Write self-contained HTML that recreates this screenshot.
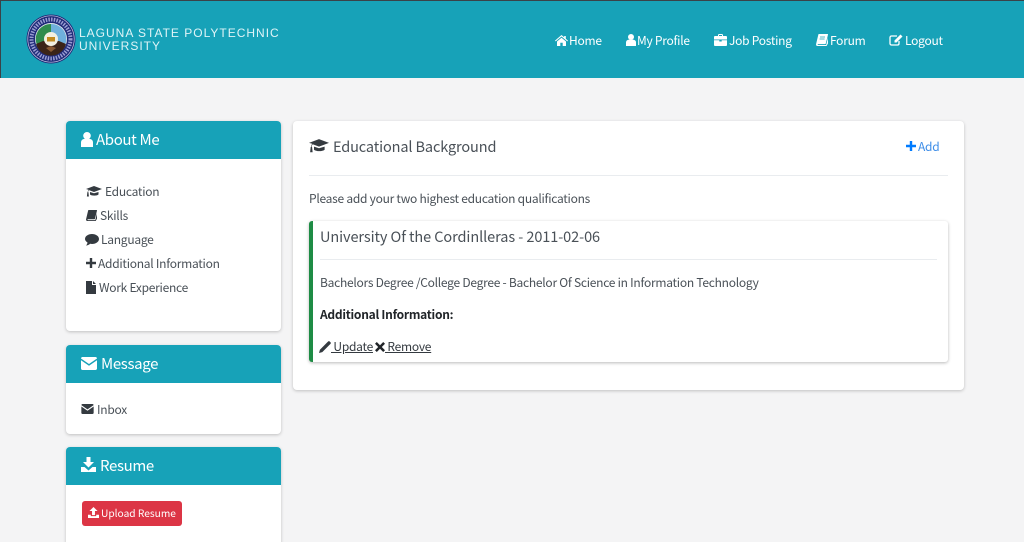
<!DOCTYPE html>
<html lang="en">
<head>
<meta charset="utf-8">
<title>Educational Background</title>
<style>
html,body{margin:0;padding:0;width:1024px;height:542px;overflow:hidden}
body{background:#f4f4f5;font-family:"Noto Sans CJK SC","Liberation Sans",sans-serif;font-size:12px;letter-spacing:-.26px;color:#495057}
#w{position:relative;width:1024px;height:542px;overflow:hidden}
.a{position:absolute;white-space:nowrap}
.t{position:absolute;white-space:nowrap;line-height:20px}
svg{position:absolute;display:block}
.card{position:absolute;background:#fff;border-radius:4px;box-shadow:0 1px 3px rgba(0,0,0,.22)}
.hd{position:absolute;background:#17a2b8;border-radius:4px 4px 0 0;left:66px;width:215px;height:38px}
.nav{color:#fff;font-size:12px}
.h{color:#fff;font-size:15px;letter-spacing:-.35px}
</style>
</head>
<body>
<div id="w">
<div class="a" style="left:0;top:0;width:1024px;height:78px;background:#17a2b8;border-top:1px solid #3a4248;border-left:1px solid #3a4248;box-sizing:border-box"></div>

<svg style="left:26px;top:14px" width="50" height="50" viewBox="0 0 50 50">
<circle cx="25" cy="25" r="24.500" fill="#1f2a78"/>
<circle cx="25" cy="25" r="23.200" fill="none" stroke="#c9cbe6" stroke-width=".7"/>
<circle cx="25" cy="25" r="19.500" fill="none" stroke="#9a9ed2" stroke-width="4" stroke-dasharray="1.500 1.200"/>
<circle cx="25" cy="25" r="16" fill="#e4e8ec"/>
<path d="M25 25L25 10A15 15 0 0 0 11 31Z" fill="#2f8c4d"/>
<path d="M25 25L25 10A15 15 0 0 1 39 31Z" fill="#6fb0dc"/>
<path d="M10 30A15.500 15.500 0 0 0 40 30L33 27H17Z" fill="#3b2418"/>
<circle cx="25" cy="25" r="7" fill="#f2efe0"/>
<rect x="21" y="23" width="8" height="4.500" fill="#c28a1e"/>
<path d="M20 34l5-2 5 2-5 4z" fill="#8a5a34"/>
</svg>
<div class="t" style="left:79px;top:27px;font-family:'Liberation Sans',sans-serif;font-size:12px;line-height:13px;color:#dff4f7;letter-spacing:1px">LAGUNA STATE POLYTECHNIC<br>UNIVERSITY</div>

<!-- nav -->
<svg style="left:555px;top:35px" width="13" height="11" viewBox="0 0 13 11"><path d="M6.500 0L0 5.600l.7.8L6.500 1.500l5.800 4.900.7-.8-2.200-1.900V1h-1.600v1.200zM2 6.500V11h3.300V7.700h2.400V11H11V6.500L6.500 2.700z" fill="#fff"/></svg>
<div class="t nav" style="left:569px;top:31px">Home</div>
<svg style="left:626px;top:34px" width="10" height="12" viewBox="0 0 10 12"><circle cx="5" cy="3" r="3" fill="#fff"/><path d="M0 12V8.500C0 6.800 1.300 5.700 2.500 5.700h5C8.700 5.700 10 6.800 10 8.500V12z" fill="#fff"/></svg>
<div class="t nav" style="left:637px;top:31px">My Profile</div>
<svg style="left:714px;top:34px" width="13" height="12" viewBox="0 0 13 12"><path d="M4 2V1.200C4 .6 4.500 0 5 0h3c.5 0 1 .6 1 1.200V2h3c.6 0 1 .4 1 1v2.500H0V3c0-.6.4-1 1-1zm1 0h3V1H5zM0 6.300h5.300v1.200h2.400V6.300H13V11c0 .6-.4 1-1 1H1c-.6 0-1-.4-1-1z" fill="#fff"/></svg>
<div class="t nav" style="left:729px;top:31px">Job Posting</div>
<svg style="left:816px;top:34px" width="12" height="12" viewBox="0 0 12 12"><path d="M3 0h8.500c.4 0 .5.300.5.600L9.800 9.500c-.1.400-.4.600-.8.600H2.300c-.8 0-.9.900-.1.900H9.500c.4 0 .7-.2.800-.5L12 3.500v6L10.500 12H1.500C.5 12-.2 11 .1 10L2.300.7C2.400.3 2.700 0 3 0z" fill="#fff"/><path d="M4 3h5M3.600 5h5" stroke="#17a2b8" stroke-width=".8"/></svg>
<div class="t nav" style="left:830px;top:31px">Forum</div>
<svg style="left:889px;top:34px" width="14" height="12" viewBox="0 0 14 12"><path d="M10 7v2.500c0 .9-.6 1.500-1.500 1.500h-6C1.600 11 1 10.400 1 9.500v-6C1 2.600 1.600 2 2.500 2H8" fill="none" stroke="#fff" stroke-width="1.300"/><path d="M11.500.5l2 2L7.500 8.500H5.500v-2z" fill="#fff"/></svg>
<div class="t nav" style="left:905px;top:31px">Logout</div>

<!-- About Me -->
<div class="card" style="left:66px;top:121px;width:215px;height:210px"></div>
<div class="hd" style="top:121px"></div>
<svg style="left:81px;top:132px" width="12" height="15" viewBox="0 0 12 15"><circle cx="6" cy="3.800" r="3.800" fill="#fff"/><path d="M0 15v-4.500C0 8.600 1.500 7 3 7h6c1.500 0 3 1.600 3 3.500V15z" fill="#fff"/></svg>
<div class="t h" style="left:96px;top:130px">About Me</div>

<svg style="left:86px;top:186px" width="16" height="11" viewBox="0 0 16 11"><path d="M8 0l8 3-8 3-5-1.900c-.5.500-.8 1.100-.9 1.900.3.200.4.400.4.700l.4 3.800H.9l.4-3.800c0-.3.100-.5.400-.7.100-1 .4-1.700.9-2.300L0 3z" fill="#343a40"/><path d="M4 6l4 1.300L12.500 6v2.500C11 10 5.500 10 4 8.500z" fill="#343a40"/></svg>
<div class="t" style="left:105px;top:182px">Education</div>
<svg style="left:86px;top:210px" width="11" height="11" viewBox="0 0 12 12"><path d="M3 0h8.500c.4 0 .5.300.5.600L9.800 9.500c-.1.400-.4.600-.8.600H2.300c-.8 0-.9.900-.1.900H9.500c.4 0 .7-.2.800-.5L12 3.500v6L10.500 12H1.500C.5 12-.2 11 .1 10L2.300.7C2.400.3 2.700 0 3 0z" fill="#343a40"/></svg>
<div class="t" style="left:100px;top:206px">Skills</div>
<svg style="left:85px;top:234px" width="14" height="12" viewBox="0 0 14 12"><path d="M7 0c3.900 0 7 2.200 7 5s-3.100 5-7 5c-.7 0-1.300-.1-1.900-.2C4 10.800 2.500 11.500 1 11.500c.8-.8 1.400-1.800 1.500-3C1 7.600 0 6.400 0 5c0-2.800 3.100-5 7-5z" fill="#343a40"/></svg>
<div class="t" style="left:101px;top:230px">Language</div>
<svg style="left:86px;top:258px" width="10" height="10" viewBox="0 0 10 10"><path d="M3.800 0h2.400v3.800H10v2.400H6.200V10H3.800V6.200H0V3.800h3.800z" fill="#343a40"/></svg>
<div class="t" style="left:98px;top:254px">Additional Information</div>
<svg style="left:86px;top:281px" width="10" height="13" viewBox="0 0 10 13"><path d="M0 0h6v4h4v9H0zM7 0l3 3H7z" fill="#343a40"/></svg>
<div class="t" style="left:99px;top:278px">Work Experience</div>

<!-- Message -->
<div class="card" style="left:66px;top:345px;width:215px;height:89px"></div>
<div class="hd" style="top:345px"></div>
<svg style="left:81px;top:357px" width="16" height="13" viewBox="0 0 16 13"><path d="M1.500 0h13c.8 0 1.500.7 1.500 1.500L8 7 0 1.500C0 .7.700 0 1.500 0zM0 3.300l8 5.500 8-5.500v8.200c0 .8-.7 1.500-1.500 1.500h-13C.7 13 0 12.300 0 11.500z" fill="#fff"/></svg>
<div class="t h" style="left:101px;top:354px">Message</div>
<svg style="left:81px;top:404px" width="13" height="10" viewBox="0 0 16 13"><path d="M1.500 0h13c.8 0 1.500.7 1.500 1.500L8 7 0 1.500C0 .7.700 0 1.500 0zM0 3.300l8 5.500 8-5.500v8.200c0 .8-.7 1.500-1.500 1.500h-13C.7 13 0 12.300 0 11.500z" fill="#343a40"/></svg>
<div class="t" style="left:97px;top:400px">Inbox</div>

<!-- Resume -->
<div class="card" style="left:66px;top:447px;width:215px;height:110px"></div>
<div class="hd" style="top:447px"></div>
<svg style="left:81px;top:457px" width="15" height="15" viewBox="0 0 15 15"><path d="M5.500 0h4v5H13L7.500 10.500 2 5h3.500zM0 10h3.500l4 3.500 4-3.500H15v5H0z" fill="#fff"/></svg>
<div class="t h" style="left:100px;top:456px">Resume</div>
<div class="a" style="left:82px;top:501px;width:100px;height:25px;background:#dc3545;border-radius:3px"></div>
<svg style="left:88px;top:507px" width="11" height="11" viewBox="0 0 15 15"><path d="M5.500 11h4V5.500H13L7.500 0 2 5.500h3.500zM0 10.500h3.800v2h7.400v-2H15V15H0z" fill="#fff"/></svg>
<div class="t" style="left:101px;top:503px;color:#fff;font-size:10.200px;letter-spacing:0">Upload Resume</div>

<!-- Main -->
<div class="card" style="left:293px;top:121px;width:671px;height:269px"></div>
<svg style="left:309px;top:139px" width="20" height="14" viewBox="0 0 16 11"><path d="M8 0l8 3-8 3-5-1.900c-.5.500-.8 1.100-.9 1.900.3.200.4.400.4.700l.4 3.800H.9l.4-3.800c0-.3.100-.5.400-.7.100-1 .4-1.700.9-2.300L0 3z" fill="#343a40"/><path d="M4 6l4 1.300L12.500 6v2.500C11 10 5.500 10 4 8.500z" fill="#343a40"/></svg>
<div class="t" style="left:333px;top:137px;font-size:14.500px;letter-spacing:-.12px">Educational Background</div>
<svg style="left:906px;top:141px" width="10" height="10" viewBox="0 0 10 10"><path d="M3.800 0h2.400v3.800H10v2.400H6.200V10H3.800V6.200H0V3.800h3.800z" fill="#007bff"/></svg>
<div class="t" style="left:918px;top:137px;color:#3f8ee8">Add</div>
<div class="a" style="left:309px;top:175px;width:639px;height:1px;background:#e9ecef"></div>
<div class="t" style="left:309px;top:189px">Please add your two highest education qualifications</div>

<div class="a" style="left:309px;top:221px;width:639px;height:141px;background:#fff;border-left:4px solid #1e8c45;box-sizing:border-box;border-radius:3px;box-shadow:0 1px 3px rgba(0,0,0,.28)"></div>
<div class="t" style="left:320px;top:227px;font-size:14.500px;letter-spacing:-.08px">University Of the Cordinlleras - 2011-02-06</div>
<div class="a" style="left:320px;top:259px;width:617px;height:1px;background:#e9ecef"></div>
<div class="t" style="left:320px;top:273px">Bachelors Degree /College Degree - Bachelor Of Science in Information Technology</div>
<div class="t" style="left:320px;top:305px;font-weight:700;color:#212529">Additional Information:</div>
<svg style="left:319px;top:341px" width="12" height="12" viewBox="0 0 12 12"><path d="M0 12l.9-3.300L8.200 1.400l2.400 2.400-7.300 7.300zM9 .6c.5-.6 1.200-.6 1.700-.1l.8.800c.5.500.5 1.200-.1 1.700l-.8.800L8.200 1.400z" fill="#343a40"/></svg>
<div class="t" style="left:331px;top:337px;color:#343a40;text-decoration:underline;white-space:pre"> Update</div>
<svg style="left:375px;top:342px" width="10" height="10" viewBox="0 0 10 10"><path d="M1.800 0L5 3.200 8.200 0 10 1.800 6.800 5 10 8.200 8.200 10 5 6.800 1.800 10 0 8.200 3.200 5 0 1.800z" fill="#212529"/></svg>
<div class="t" style="left:385px;top:337px;color:#343a40;text-decoration:underline;white-space:pre"> Remove</div>
</div>
</body>
</html>
